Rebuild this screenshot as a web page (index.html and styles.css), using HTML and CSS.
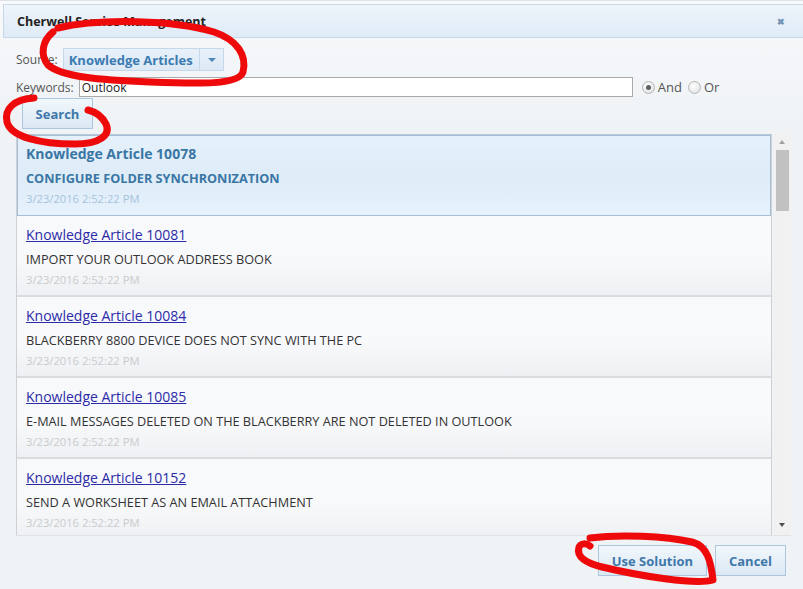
FILE: index.html
```html
<!doctype html>
<html lang="en-US">
  <head>
    <title>Cherwell Service Management</title>
    <link rel="stylesheet" href="styles.css">
  </head>
  <body>
    <div class="dialog">
      <div class="titlebar">
        <span class="title">Cherwell Service Management</span>
        <span class="close">&#x2716;</span>
      </div>

      <div class="content">
        <div class="row sourceRow">
          <span class="label">Source:</span>
          <div class="combo">
            <span class="comboText">Knowledge Articles</span>
            <span class="comboArrow"></span>
          </div>
        </div>

        <div class="row keywordRow">
          <span class="label">Keywords:</span>
          <input class="keywords" type="text" value="Outlook">
          <span class="radio checked"></span><span class="radioLabel">And</span>
          <span class="radio"></span><span class="radioLabel">Or</span>
        </div>

        <button class="btn searchBtn">Search</button>

        <div class="results">
          <div class="list">
            <div class="item selected">
              <div class="itemTitle">Knowledge Article 10078</div>
              <div class="itemDesc">CONFIGURE FOLDER SYNCHRONIZATION</div>
              <div class="itemDate">3/23/2016 2:52:22 PM</div>
            </div>
            <div class="item">
              <a class="itemTitle" href="#">Knowledge Article 10081</a>
              <div class="itemDesc">IMPORT YOUR OUTLOOK ADDRESS BOOK</div>
              <div class="itemDate">3/23/2016 2:52:22 PM</div>
            </div>
            <div class="item">
              <a class="itemTitle" href="#">Knowledge Article 10084</a>
              <div class="itemDesc">BLACKBERRY 8800 DEVICE DOES NOT SYNC WITH THE PC</div>
              <div class="itemDate">3/23/2016 2:52:22 PM</div>
            </div>
            <div class="item">
              <a class="itemTitle" href="#">Knowledge Article 10085</a>
              <div class="itemDesc">E-MAIL MESSAGES DELETED ON THE BLACKBERRY ARE NOT DELETED IN OUTLOOK</div>
              <div class="itemDate">3/23/2016 2:52:22 PM</div>
            </div>
            <div class="item">
              <a class="itemTitle" href="#">Knowledge Article 10152</a>
              <div class="itemDesc">SEND A WORKSHEET AS AN EMAIL ATTACHMENT</div>
              <div class="itemDate">3/23/2016 2:52:22 PM</div>
            </div>
          </div>
          <div class="scrollbar">
            <span class="scrollUp"></span>
            <span class="thumb"></span>
            <span class="scrollDown"></span>
          </div>
        </div>

        <div class="footer">
          <button class="btn">Use Solution</button>
          <button class="btn">Cancel</button>
        </div>
      </div>

      <!-- hand-drawn marker annotations -->
      <svg class="marks" width="803" height="589" viewBox="0 0 803 589">
        <path d="M 58 27 C 100 17, 175 19, 214 31 C 238 39, 247 55, 243 71 C 239 84, 200 83, 150 81 C 100 79, 62 76, 48 64 C 40 54, 42 40, 53 31" />
        <path d="M 34 97 C 14 98, 4 108, 7 121 C 11 136, 40 143, 75 143 C 100 143, 111 134, 106 123 C 102 115, 96 111, 88 109" />
        <path d="M 590 537 C 620 533, 665 535, 692 541 C 708 545, 711 562, 713 579 C 695 584, 640 575, 602 566 C 586 562, 576 556, 579 546 C 581 542, 586 542, 590 545" />
      </svg>
    </div>
  </body>
</html>
```

FILE: styles.css
```css
body {
  margin: 0;
  background-color: #f0f3f6;
  font-family: "Open Sans", "Noto Sans", sans-serif;
  color: #444;
}

.dialog {
  position: relative;
  width: 803px;
  height: 589px;
  padding-top: 3px;
  box-sizing: border-box;
  border-top: 1px solid #dde2e7;
  background: linear-gradient(#f7f9fb, #f0f3f6 120px);
  overflow: hidden;
}

.titlebar {
  display: flex;
  align-items: center;
  justify-content: space-between;
  height: 32px;
  margin-left: 3px;
  padding: 0 18px 0 13px;
  border: 1px solid #c7d8e7;
  border-right: none;
  background: linear-gradient(#edf4fb, #dfebf7);
}

.title {
  font-size: 12.5px;
  font-weight: bold;
  color: #222;
}

.close {
  font-size: 9px;
  font-weight: bold;
  color: #7393b4;
  margin-top: 1px;
}

.content {
  padding: 10px 12px 0 16px;
}

.row {
  display: flex;
  align-items: center;
  font-size: 12px;
}

.label {
  color: #555;
  margin-right: 4px;
}

.combo {
  display: flex;
  align-items: center;
  height: 21px;
  margin-left: 1px;
  border: 1px solid #c4d8ea;
  background: linear-gradient(#e8f1fa, #dce9f5);
}

.comboText {
  padding: 0 6px 0 5px;
  font-size: 13px;
  font-weight: bold;
  color: #3b7bb2;
}

.comboArrow {
  position: relative;
  width: 23px;
  height: 21px;
  border-left: 1px solid #c4d8ea;
}

.comboArrow::after {
  content: "";
  position: absolute;
  left: 8px;
  top: 9px;
  border-left: 4px solid transparent;
  border-right: 4px solid transparent;
  border-top: 4px solid #4f86b8;
}

.keywordRow {
  margin-top: 6px;
}

.keywords {
  width: 554px;
  height: 20px;
  box-sizing: border-box;
  margin: 0 9px 0 1px;
  padding: 0 2px;
  border: 1px solid #a9a9a9;
  font-family: "Open Sans", "Noto Sans", sans-serif;
  font-size: 12px;
  color: #222;
  outline: none;
}

.radio {
  width: 11px;
  height: 11px;
  border: 1px solid #b5b5b5;
  border-radius: 50%;
  background: radial-gradient(circle at 40% 35%, #ffffff, #dcdcdc);
  margin-right: 3px;
  position: relative;
}

.radio.checked::after {
  content: "";
  position: absolute;
  left: 3px;
  top: 3px;
  width: 5px;
  height: 5px;
  border-radius: 50%;
  background: #606060;
}

.radioLabel {
  font-size: 13px;
  color: #555;
  margin-right: 6px;
}

.btn {
  height: 31px;
  padding: 0 13px;
  border: 1px solid #aac7df;
  background: linear-gradient(#f1f7fc, #dbe8f4);
  font-family: "Open Sans", "Noto Sans", sans-serif;
  font-size: 13px;
  font-weight: bold;
  color: #3e78aa;
}

.searchBtn {
  display: block;
  margin: 1px 0 5px 6px;
  width: 71px;
  padding: 0;
}

.results {
  display: flex;
  height: 401px;
  width: 775px;
  border-bottom: 1px solid #dfe2e6;
}

.list {
  width: 756px;
  overflow: hidden;
  border: 1px solid #cdd1d6;
  border-top-color: #b9c8d6;
  border-bottom: none;
  box-sizing: border-box;
}

.item {
  height: 81px;
  box-sizing: border-box;
  padding: 9px 9px 0;
  border-bottom: 2px solid #d9dcdf;
  background: linear-gradient(#f8f9fb 55%, #eef0f3);
}

.itemTitle {
  display: block;
  height: 20px;
  line-height: 20px;
  font-size: 14px;
  color: #2b2ba8;
  text-decoration: underline;
}

.itemDesc {
  margin-top: 3px;
  line-height: 22px;
  font-size: 12.7px;
  color: #333;
}

.itemDate {
  line-height: 20px;
  font-size: 11.2px;
  color: #c9cbcd;
}

.item.selected {
  border: 1px solid #a7bfd5;
  padding-top: 8px;
  padding-left: 8px;
  background: linear-gradient(#e5f1fb, #deecf8 50%, #e6f2fc);
}

.item.selected .itemTitle {
  font-weight: bold;
  text-decoration: none;
  color: #3a76a4;
}

.item.selected .itemDesc {
  font-weight: bold;
  color: #3a76a4;
}

.item.selected .itemDate {
  color: #a6c3dc;
}

.scrollbar {
  position: relative;
  width: 17px;
  margin-left: 2px;
  background: #f1f1f1;
}

.scrollUp,
.scrollDown {
  position: absolute;
  left: 5px;
  border-left: 3px solid transparent;
  border-right: 3px solid transparent;
}

.scrollUp {
  top: 6px;
  border-bottom: 4px solid #a3a3a3;
}

.scrollDown {
  bottom: 8px;
  border-top: 4px solid #505050;
}

.thumb {
  position: absolute;
  left: 2px;
  top: 16px;
  width: 13px;
  height: 61px;
  background: #c1c1c1;
}

.footer {
  display: flex;
  justify-content: flex-end;
  gap: 8px;
  width: 770px;
  margin-top: 9px;
}

.footer .btn {
  height: 31px;
}

.marks {
  position: absolute;
  left: 0;
  top: 0;
  pointer-events: none;
}

.marks path {
  fill: none;
  stroke: #ee0a0a;
  stroke-width: 7;
  stroke-linecap: round;
  stroke-linejoin: round;
}
```
